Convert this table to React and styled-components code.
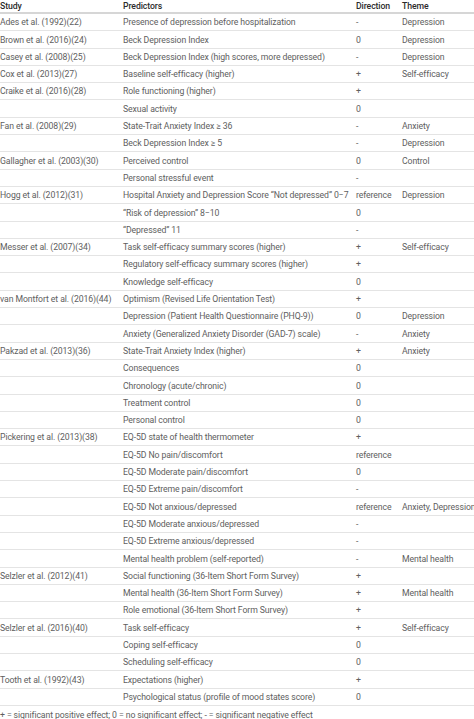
import React from "react";
import styled, { createGlobalStyle } from "styled-components";

const GlobalStyle = createGlobalStyle`
  html, body {
    margin: 0;
    padding: 0;
    background: #fff;
    overflow: hidden;
  }
  body {
    font-family: Roboto, "Liberation Sans", sans-serif;
  }
`;

const Page = styled.div`
  width: 474px;
  height: 719px;
  overflow: hidden;
  background: #fff;
`;

const Table = styled.div`
  display: flex;
  flex-direction: column;
`;

const Row = styled.div`
  display: grid;
  grid-template-columns: 123px 233px 46px 1fr;
  align-items: center;
  height: ${(p) => (p.$head ? "14px" : "17.3px")};
  box-sizing: border-box;
  border-bottom: ${(p) => (p.$head ? "2px solid #d6d6d6" : "1px solid #e4e4e4")};
  font-size: 8.7px;
  letter-spacing: -0.1px;
  color: ${(p) => (p.$head ? "#2b2b2b" : "#606060")};
  font-weight: ${(p) => (p.$head ? 500 : 400)};
  white-space: nowrap;
`;

const Cell = styled.div`
  line-height: 1;
  padding-top: 1px;
`;

const Footer = styled.div`
  padding-top: 5px;
  font-size: 8.7px;
  letter-spacing: -0.1px;
  line-height: 1;
  color: #606060;
  white-space: nowrap;
`;

const rows = [
  ["Ades et al. (1992)(22)", "Presence of depression before hospitalization", "-", "Depression"],
  ["Brown et al. (2016)(24)", "Beck Depression Index", "0", "Depression"],
  ["Casey et al. (2008)(25)", "Beck Depression Index (high scores, more depressed)", "-", "Depression"],
  ["Cox et al. (2013)(27)", "Baseline self-efficacy (higher)", "+", "Self-efficacy"],
  ["Craike et al. (2016)(28)", "Role functioning (higher)", "+", ""],
  ["", "Sexual activity", "0", ""],
  ["Fan et al. (2008)(29)", "State-Trait Anxiety Index \u2265 36", "-", "Anxiety"],
  ["", "Beck Depression Index \u2265 5", "-", "Depression"],
  ["Gallagher et al. (2003)(30)", "Perceived control", "0", "Control"],
  ["", "Personal stressful event", "-", ""],
  ["Hogg et al. (2012)(31)", "Hospital Anxiety and Depression Score \u201cNot depressed\u201d 0\u22127", "reference", "Depression"],
  ["", "\u201cRisk of depression\u201d 8\u221210", "0", ""],
  ["", "\u201cDepressed\u201d 11", "-", ""],
  ["Messer et al. (2007)(34)", "Task self-efficacy summary scores (higher)", "+", "Self-efficacy"],
  ["", "Regulatory self-efficacy summary scores (higher)", "+", ""],
  ["", "Knowledge self-efficacy", "0", ""],
  ["van Montfort et al. (2016)(44)", "Optimism (Revised Life Orientation Test)", "+", ""],
  ["", "Depression (Patient Health Questionnaire (PHQ-9))", "0", "Depression"],
  ["", "Anxiety (Generalized Anxiety Disorder (GAD-7) scale)", "-", "Anxiety"],
  ["Pakzad et al. (2013)(36)", "State-Trait Anxiety Index (higher)", "+", "Anxiety"],
  ["", "Consequences", "0", ""],
  ["", "Chronology (acute/chronic)", "0", ""],
  ["", "Treatment control", "0", ""],
  ["", "Personal control", "0", ""],
  ["Pickering et al. (2013)(38)", "EQ-5D state of health thermometer", "+", ""],
  ["", "EQ-5D No pain/discomfort", "reference", ""],
  ["", "EQ-5D Moderate pain/discomfort", "0", ""],
  ["", "EQ-5D Extreme pain/discomfort", "-", ""],
  ["", "EQ-5D Not anxious/depressed", "reference", "Anxiety, Depression"],
  ["", "EQ-5D Moderate anxious/depressed", "-", ""],
  ["", "EQ-5D Extreme anxious/depressed", "-", ""],
  ["", "Mental health problem (self-reported)", "-", "Mental health"],
  ["Selzler et al. (2012)(41)", "Social functioning (36-Item Short Form Survey)", "+", ""],
  ["", "Mental health (36-Item Short Form Survey)", "+", "Mental health"],
  ["", "Role emotional (36-Item Short Form Survey)", "+", ""],
  ["Selzler et al. (2016)(40)", "Task self-efficacy", "+", "Self-efficacy"],
  ["", "Coping self-efficacy", "0", ""],
  ["", "Scheduling self-efficacy", "0", ""],
  ["Tooth et al. (1992)(43)", "Expectations (higher)", "+", ""],
  ["", "Psychological status (profile of mood states score)", "0", ""],
];

export default function App() {
  return (
    <Page>
      <GlobalStyle />
      <Table>
        <Row $head>
          <Cell>Study</Cell>
          <Cell>Predictors</Cell>
          <Cell>Direction</Cell>
          <Cell>Theme</Cell>
        </Row>
        {rows.map((r, i) => (
          <Row key={i}>
            <Cell>{r[0]}</Cell>
            <Cell>{r[1]}</Cell>
            <Cell>{r[2]}</Cell>
            <Cell>{r[3]}</Cell>
          </Row>
        ))}
      </Table>
      <Footer>
        + = significant positive effect; 0 = no significant effect; - = significant negative effect
      </Footer>
    </Page>
  );
}
